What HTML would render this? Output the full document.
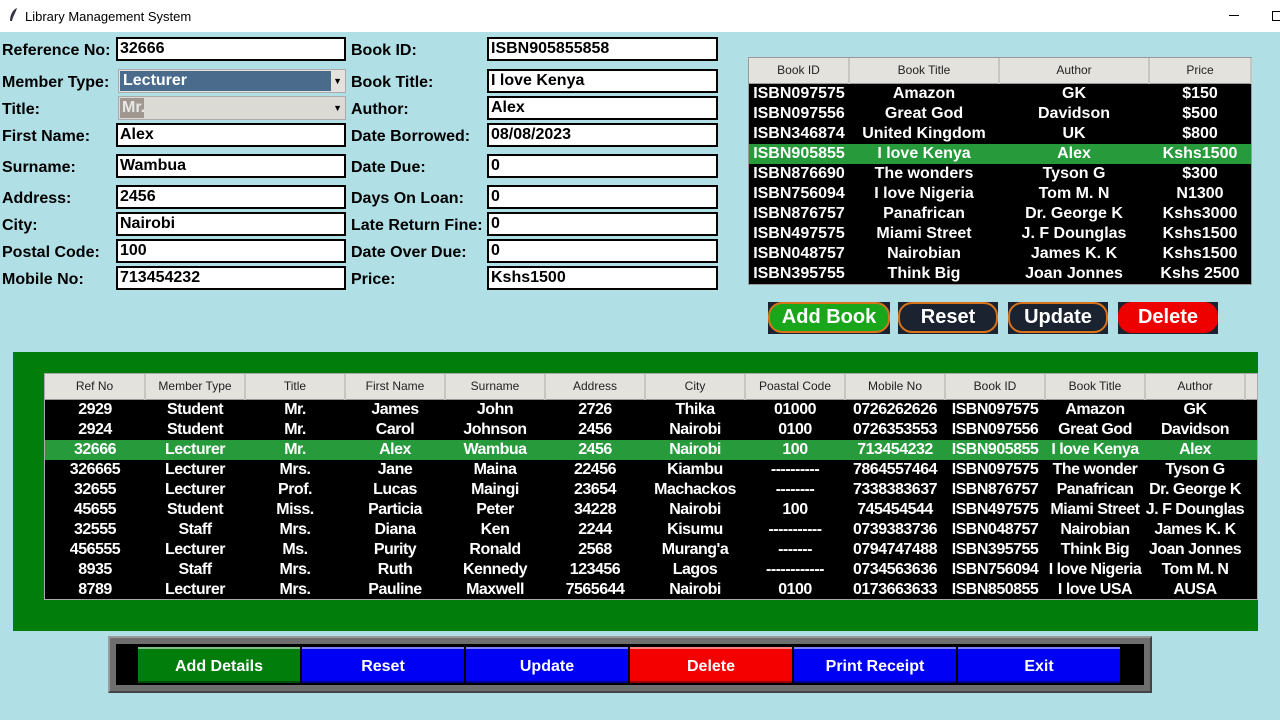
<!DOCTYPE html>
<html><head><meta charset="utf-8"><style>
*{margin:0;padding:0;box-sizing:border-box}
body{width:1280px;height:720px;background:#b0dfe6;font-family:"Liberation Sans",Arial,sans-serif;position:relative;overflow:hidden}
.tb{position:absolute;left:0;top:0;width:1280px;height:32px;background:#fff;font-size:13px;color:#000}
.tb span{position:absolute;left:25px;top:9px}
.a{position:absolute}
.l{position:absolute;font-weight:bold;font-size:16px;color:#000;line-height:18px;margin-top:3px}
.e{position:absolute;height:24px;background:#fff;border:2px solid #000;font-weight:bold;font-size:16px;padding-left:2px;line-height:20px}
.cb{position:absolute;height:24px;border:1px solid #aaa;font-weight:bold;font-size:16px;line-height:22px}
table{border-collapse:collapse;table-layout:fixed}
td,th{text-align:center;white-space:nowrap;overflow:hidden;padding:0}
th{background:#e4e2dc;font-weight:normal;font-size:12px;color:#222;height:25px;border-right:2px solid #c8c6c0;border-bottom:1px solid #999}
td{color:#fff;font-weight:bold;font-size:16px;height:20px;line-height:20px}
.bt td{letter-spacing:-0.5px}
tr.s td{background:#279a3c}
.bb{position:absolute;height:31px;border:2px solid #d9731c;border-radius:14px;color:#fff;font-weight:bold;font-size:20px;text-align:center;line-height:26px}
.bw{position:absolute;background:#1b2330}
.fb{position:absolute;top:647px;height:36px;width:162px;color:#fff;font-weight:bold;font-size:16px;text-align:center;line-height:36px;border-top:2px solid rgba(255,255,255,.5);border-bottom:2px solid rgba(0,0,0,.4)}
</style></head><body>
<div class="tb"><span>Library Management System</span>
<svg class="a" style="left:8px;top:7px" width="12" height="16" viewBox="0 0 12 16"><path d="M9 1 C4 3 2 9 2 14 L4 14 C5 9 8 5 9 1Z" fill="#334"/></svg>
<div class="a" style="left:1229px;top:15px;width:10px;height:1px;background:#000"></div>
<div class="a" style="left:1272px;top:11px;width:10px;height:10px;border:1px solid #000"></div>
</div>

<div class="l" style="left:2px;top:39px">Reference No:</div>
<div class="l" style="left:2px;top:71px">Member Type:</div>
<div class="l" style="left:2px;top:98px">Title:</div>
<div class="l" style="left:2px;top:125px">First Name:</div>
<div class="l" style="left:2px;top:156px">Surname:</div>
<div class="l" style="left:2px;top:187px">Address:</div>
<div class="l" style="left:2px;top:214px">City:</div>
<div class="l" style="left:2px;top:241px">Postal Code:</div>
<div class="l" style="left:2px;top:268px">Mobile No:</div>

<div class="e" style="left:116px;top:37px;width:230px">32666</div>
<div class="cb" style="left:118px;top:69px;width:228px;background:#e4e2dc"><div style="position:absolute;left:1px;top:1px;width:211px;height:20px;background:#4a6b8c;color:#fff;padding-left:3px;line-height:20px">Lecturer</div><span style="position:absolute;right:3px;top:0;font-size:9px">▼</span></div>
<div class="cb" style="left:118px;top:96px;width:228px;background:#dcdad5"><div style="position:absolute;left:1px;top:1px;width:24px;height:20px;background:#a09890;color:#e8e8e8;padding-left:2px;line-height:20px">Mr.</div><span style="position:absolute;right:3px;top:0;font-size:9px">▼</span></div>
<div class="e" style="left:116px;top:123px;width:230px">Alex</div>
<div class="e" style="left:116px;top:154px;width:230px">Wambua</div>
<div class="e" style="left:116px;top:185px;width:230px">2456</div>
<div class="e" style="left:116px;top:212px;width:230px">Nairobi</div>
<div class="e" style="left:116px;top:239px;width:230px">100</div>
<div class="e" style="left:116px;top:266px;width:230px">713454232</div>

<div class="l" style="left:351px;top:39px">Book ID:</div>
<div class="l" style="left:351px;top:71px">Book Title:</div>
<div class="l" style="left:351px;top:98px">Author:</div>
<div class="l" style="left:351px;top:125px">Date Borrowed:</div>
<div class="l" style="left:351px;top:156px">Date Due:</div>
<div class="l" style="left:351px;top:187px">Days On Loan:</div>
<div class="l" style="left:351px;top:214px">Late Return Fine:</div>
<div class="l" style="left:351px;top:241px">Date Over Due:</div>
<div class="l" style="left:351px;top:268px">Price:</div>

<div class="e" style="left:487px;top:37px;width:231px">ISBN905855858</div>
<div class="e" style="left:487px;top:69px;width:231px">I love Kenya</div>
<div class="e" style="left:487px;top:96px;width:231px">Alex</div>
<div class="e" style="left:487px;top:123px;width:231px">08/08/2023</div>
<div class="e" style="left:487px;top:154px;width:231px">0</div>
<div class="e" style="left:487px;top:185px;width:231px">0</div>
<div class="e" style="left:487px;top:212px;width:231px">0</div>
<div class="e" style="left:487px;top:239px;width:231px">0</div>
<div class="e" style="left:487px;top:266px;width:231px">Kshs1500</div>

<div class="a" style="left:748px;top:57px;width:504px;height:228px;background:#000;border:1px solid #999">
<table style="width:502px"><colgroup><col style="width:100px"><col style="width:150px"><col style="width:150px"><col style="width:102px"></colgroup>
<tr><th>Book ID</th><th>Book Title</th><th>Author</th><th>Price</th></tr>
<tr><td>ISBN097575</td><td>Amazon</td><td>GK</td><td>$150</td></tr>
<tr><td>ISBN097556</td><td>Great God</td><td>Davidson</td><td>$500</td></tr>
<tr><td>ISBN346874</td><td>United Kingdom</td><td>UK</td><td>$800</td></tr>
<tr class="s"><td>ISBN905855</td><td>I love Kenya</td><td>Alex</td><td>Kshs1500</td></tr>
<tr><td>ISBN876690</td><td>The wonders</td><td>Tyson G</td><td>$300</td></tr>
<tr><td>ISBN756094</td><td>I love Nigeria</td><td>Tom M. N</td><td>N1300</td></tr>
<tr><td>ISBN876757</td><td>Panafrican</td><td>Dr. George K</td><td>Kshs3000</td></tr>
<tr><td>ISBN497575</td><td>Miami Street</td><td>J. F Dounglas</td><td>Kshs1500</td></tr>
<tr><td>ISBN048757</td><td>Nairobian</td><td>James K. K</td><td>Kshs1500</td></tr>
<tr><td>ISBN395755</td><td>Think Big</td><td>Joan Jonnes</td><td>Kshs 2500</td></tr>
</table></div>

<div class="bw" style="left:768px;top:302px;width:122px;height:32px"></div>
<div class="bb" style="left:768px;top:302px;width:122px;background:#1aa61a">Add Book</div>
<div class="bw" style="left:898px;top:302px;width:100px;height:32px"></div>
<div class="bb" style="left:898px;top:302px;width:100px;background:#1b2330">Reset</div>
<div class="bw" style="left:1008px;top:302px;width:100px;height:32px"></div>
<div class="bb" style="left:1008px;top:302px;width:100px;background:#1b2330">Update</div>
<div class="bw" style="left:1118px;top:302px;width:100px;height:32px"></div>
<div class="bb" style="left:1118px;top:302px;width:100px;background:#e00;border-color:#e00">Delete</div>

<div class="a" style="left:13px;top:352px;width:1245px;height:279px;background:#007d0a"></div>
<div class="a" style="left:44px;top:373px;width:1214px;height:227px;background:#000;border:1px solid #aaa;overflow:hidden">
<table class="bt" style="width:1300px"><colgroup><col style="width:100px"><col style="width:100px"><col style="width:100px"><col style="width:100px"><col style="width:100px"><col style="width:100px"><col style="width:100px"><col style="width:100px"><col style="width:100px"><col style="width:100px"><col style="width:100px"><col style="width:100px"><col style="width:100px"></colgroup>
<tr><th>Ref No</th><th>Member Type</th><th>Title</th><th>First Name</th><th>Surname</th><th>Address</th><th>City</th><th>Poastal Code</th><th>Mobile No</th><th>Book ID</th><th>Book Title</th><th>Author</th><th>Price</th></tr>
<tr><td>2929</td><td>Student</td><td>Mr.</td><td>James</td><td>John</td><td>2726</td><td>Thika</td><td>01000</td><td>0726262626</td><td>ISBN097575</td><td>Amazon</td><td>GK</td><td>$150</td></tr>
<tr><td>2924</td><td>Student</td><td>Mr.</td><td>Carol</td><td>Johnson</td><td>2456</td><td>Nairobi</td><td>0100</td><td>0726353553</td><td>ISBN097556</td><td>Great God</td><td>Davidson</td><td>$500</td></tr>
<tr class="s"><td>32666</td><td>Lecturer</td><td>Mr.</td><td>Alex</td><td>Wambua</td><td>2456</td><td>Nairobi</td><td>100</td><td>713454232</td><td>ISBN905855</td><td>I love Kenya</td><td>Alex</td><td>Kshs</td></tr>
<tr><td>326665</td><td>Lecturer</td><td>Mrs.</td><td>Jane</td><td>Maina</td><td>22456</td><td>Kiambu</td><td>----------</td><td>7864557464</td><td>ISBN097575</td><td>The wonder</td><td>Tyson G</td><td>$300</td></tr>
<tr><td>32655</td><td>Lecturer</td><td>Prof.</td><td>Lucas</td><td>Maingi</td><td>23654</td><td>Machackos</td><td>--------</td><td>7338383637</td><td>ISBN876757</td><td>Panafrican</td><td>Dr. George K</td><td>$3</td></tr>
<tr><td>45655</td><td>Student</td><td>Miss.</td><td>Particia</td><td>Peter</td><td>34228</td><td>Nairobi</td><td>100</td><td>745454544</td><td>ISBN497575</td><td>Miami Street</td><td>J. F Dounglas</td><td>K</td></tr>
<tr><td>32555</td><td>Staff</td><td>Mrs.</td><td>Diana</td><td>Ken</td><td>2244</td><td>Kisumu</td><td>-----------</td><td>0739383736</td><td>ISBN048757</td><td>Nairobian</td><td>James K. K</td><td>K</td></tr>
<tr><td>456555</td><td>Lecturer</td><td>Ms.</td><td>Purity</td><td>Ronald</td><td>2568</td><td>Murang'a</td><td>-------</td><td>0794747488</td><td>ISBN395755</td><td>Think Big</td><td>Joan Jonnes</td><td>1</td></tr>
<tr><td>8935</td><td>Staff</td><td>Mrs.</td><td>Ruth</td><td>Kennedy</td><td>123456</td><td>Lagos</td><td>------------</td><td>0734563636</td><td>ISBN756094</td><td>I love Nigeria</td><td>Tom M. N</td><td>1</td></tr>
<tr><td>8789</td><td>Lecturer</td><td>Mrs.</td><td>Pauline</td><td>Maxwell</td><td>7565644</td><td>Nairobi</td><td>0100</td><td>0173663633</td><td>ISBN850855</td><td>I love USA</td><td>AUSA</td><td>K</td></tr>
</table></div>

<div class="a" style="left:108px;top:636px;width:1044px;height:57px;background:#6e6e6e;border:2px solid #9a9a9a;border-right-color:#444;border-bottom-color:#444"></div>
<div class="a" style="left:116px;top:644px;width:1028px;height:41px;background:#000"></div>
<div class="fb" style="left:138px;background:#007d0a">Add Details</div>
<div class="fb" style="left:302px;background:#0000f5">Reset</div>
<div class="fb" style="left:466px;background:#0000f5">Update</div>
<div class="fb" style="left:630px;background:#f50000">Delete</div>
<div class="fb" style="left:794px;background:#0000f5">Print Receipt</div>
<div class="fb" style="left:958px;background:#0000f5">Exit</div>
</body></html>
